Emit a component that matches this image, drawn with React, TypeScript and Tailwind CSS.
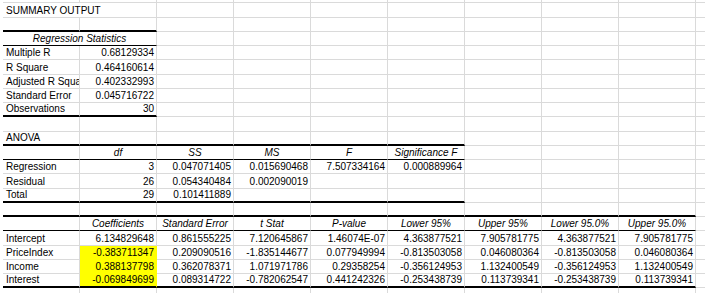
import React from 'react';

type Cell = { t?: string; a?: 'l' | 'r' | 'c'; i?: boolean; span?: number; y?: boolean };
type Row = { c: Cell[]; b?: 'thick' | 'thin'; n?: number };

const L = (t: string): Cell => ({ t });
const R = (t: string, y = false): Cell => ({ t, a: 'r', y });
const H = (t: string): Cell => ({ t, a: 'c', i: true });

const rows: Row[] = [
  { c: [{ t: 'SUMMARY OUTPUT', span: 2 }] },
  { c: [], b: 'thick', n: 2 },
  { c: [{ t: 'Regression Statistics', span: 2, a: 'c', i: true }], b: 'thin', n: 2 },
  { c: [L('Multiple R'), R('0.68129334')] },
  { c: [L('R Square'), R('0.464160614')] },
  { c: [L('Adjusted R Square'), R('0.402332993')] },
  { c: [L('Standard Error'), R('0.045716722')] },
  { c: [L('Observations'), R('30')], b: 'thick', n: 2 },
  { c: [] },
  { c: [L('ANOVA')], b: 'thick', n: 6 },
  { c: [{}, H('df'), H('SS'), H('MS'), H('F'), H('Significance F')], b: 'thin', n: 6 },
  { c: [L('Regression'), R('3'), R('0.047071405'), R('0.015690468'), R('7.507334164'), R('0.000889964')] },
  { c: [L('Residual'), R('26'), R('0.054340484'), R('0.002090019')] },
  { c: [L('Total'), R('29'), R('0.101411889')], b: 'thick', n: 6 },
  { c: [], b: 'thick', n: 9 },
  {
    c: [{}, H('Coefficients'), H('Standard Error'), H('t Stat'), H('P-value'), H('Lower 95%'), H('Upper 95%'), H('Lower 95.0%'), H('Upper 95.0%')],
    b: 'thin',
    n: 9,
  },
  { c: [L('Intercept'), R('6.134829648'), R('0.861555225'), R('7.120645867'), R('1.46074E-07'), R('4.363877521'), R('7.905781775'), R('4.363877521'), R('7.905781775')] },
  { c: [L('PriceIndex'), R('-0.383711347', true), R('0.209090516'), R('-1.835144677'), R('0.077949994'), R('-0.813503058'), R('0.046080364'), R('-0.813503058'), R('0.046080364')] },
  { c: [L('Income'), R('0.388137798', true), R('0.362078371'), R('1.071971786'), R('0.29358254'), R('-0.356124953'), R('1.132400549'), R('-0.356124953'), R('1.132400549')] },
  { c: [L('Interest'), R('-0.069849699', true), R('0.089314722'), R('-0.782062547'), R('0.441242326'), R('-0.253438739'), R('0.113739341'), R('-0.253438739'), R('0.113739341')], b: 'thick', n: 9 },
  { c: [] },
];

const SheetCell: React.FC<{ cell: Cell; bottom?: 'thick' | 'thin'; last?: boolean }> = ({ cell, bottom, last }) => {
  const yellow = !!cell.y;
  const b =
    bottom === 'thick'
      ? 'border-b-2 border-b-black'
      : bottom === 'thin'
        ? 'border-b border-b-black'
        : yellow
          ? 'border-b border-b-[#ffff00]'
          : 'border-b border-b-[#dadada]';
  const r = last ? '' : yellow ? 'border-r border-r-[#ffff00]' : 'border-r border-r-[#dadada]';
  const align = cell.a === 'r' ? 'justify-end pr-[2px]' : cell.a === 'c' ? 'justify-center' : 'justify-start pl-[3px]';
  return (
    <div
      className={`flex items-end overflow-hidden whitespace-nowrap leading-[10px] pb-px ${b} ${r} ${align} ${
        cell.i ? 'italic' : ''
      } ${yellow ? 'bg-[#ffff00]' : ''} ${cell.span === 2 ? 'col-span-2' : ''}`}
    >
      {cell.t}
    </div>
  );
};

export default function App() {
  return (
    <div
      className="w-[705px] h-[293px] overflow-hidden bg-white text-black text-[10px]"
      style={{ fontFamily: '"Liberation Sans", Arial, sans-serif' }}
    >
      <div className="grid grid-cols-[3px_repeat(9,77px)_1fr] grid-rows-[3.3px] auto-rows-[14.25px]">
        {/* cropped row above the sheet */}
        <div />
        {Array.from({ length: 9 }).map((_, k) => (
          <div key={`t${k}`} className="border-r border-b border-[#dadada]" />
        ))}
        <div className="border-b border-[#dadada]" />

        {rows.map((row, ri) => {
          const out: React.ReactNode[] = [<div key={`g${ri}`} />];
          let col = 0;
          let idx = 0;
          while (col < 9) {
            const cell = row.c[idx] ?? {};
            const span = cell.span ?? 1;
            const bottom = row.b && col < (row.n ?? 0) ? row.b : undefined;
            out.push(<SheetCell key={`${ri}-${col}`} cell={cell} bottom={bottom} />);
            col += span;
            idx += 1;
          }
          out.push(<SheetCell key={`${ri}-j`} cell={{}} last />);
          return out;
        })}
      </div>
    </div>
  );
}
